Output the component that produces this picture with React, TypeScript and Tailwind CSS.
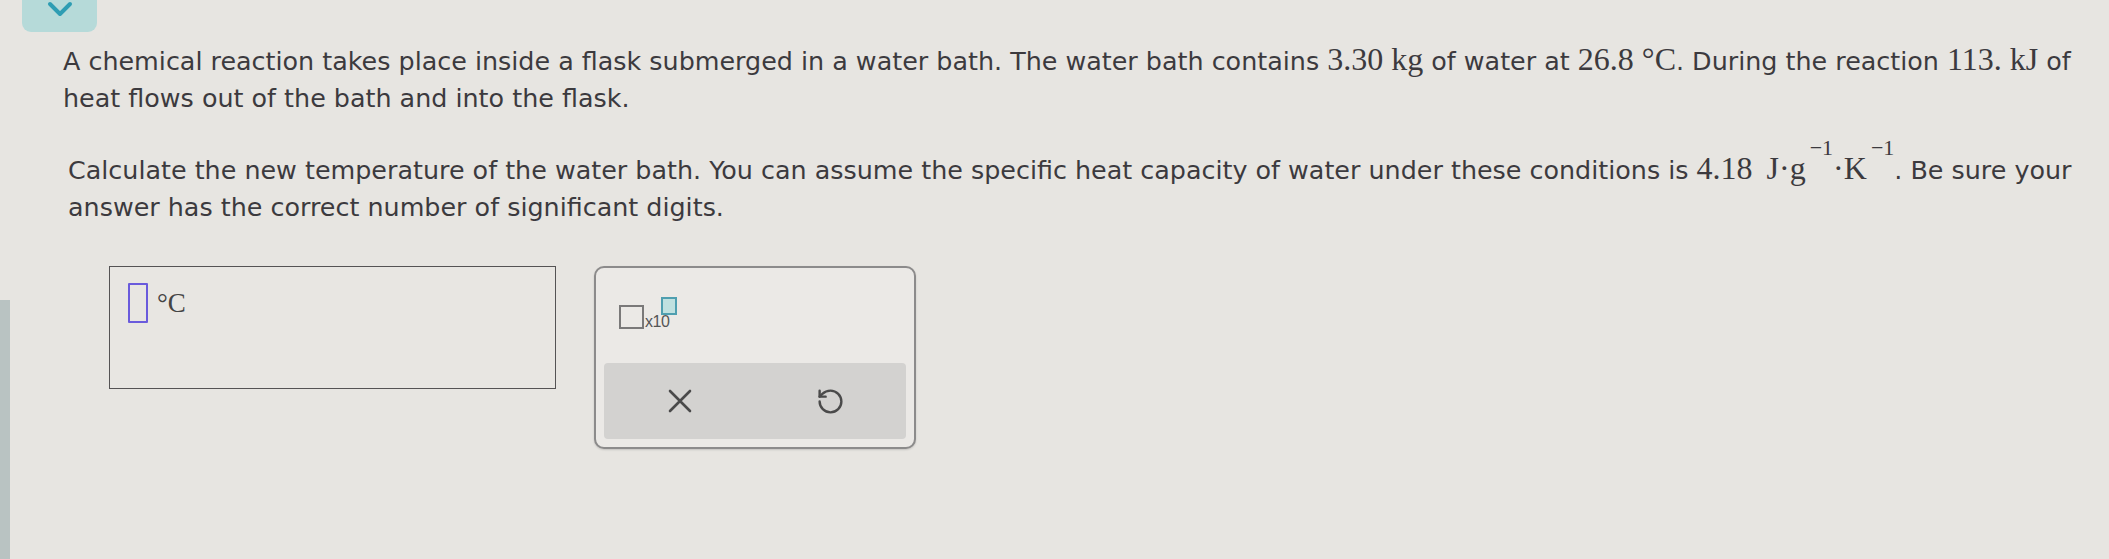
import { RotateCcw } from 'lucide-react'

const SANS = "font-['DejaVu_Sans','Verdana',sans-serif]"

function M({ children }: { children: React.ReactNode }) {
  // math parts are set in a serif face, larger than body text
  return <span className="font-['Liberation_Serif',serif] text-[32px]">{children}</span>
}

function Sup({ children }: { children: React.ReactNode }) {
  return (
    <span className="font-['Liberation_Serif',serif] text-[22px] leading-none align-[24px] ml-[4px]">
      {children}
    </span>
  )
}

export default function App() {
  return (
    <div className={`${SANS} min-h-[559px] w-full bg-[#e7e5e1] text-[#3c3a3e] flex`}>
      {/* left edge strip */}
      <div className="w-[10px] shrink-0 flex flex-col">
        <div className="h-[300px]" />
        <div className="flex-1 bg-[#b9c3c2]" />
      </div>

      <div className="flex-1 flex flex-col">
        {/* collapse tab */}
        <div className="ml-[12px] w-[75px] h-[32px] rounded-b-[9px] bg-[#b6dad9] flex justify-center">
          <svg width="28" height="18" viewBox="0 0 28 18" fill="none" stroke="#2e9db3" strokeWidth={4} strokeLinecap="round" strokeLinejoin="round">
            <path d="M4 4 L14 14 L24 4" />
          </svg>
        </div>

        <p className="mt-[9px] ml-[53px] text-[25.4px] leading-[37px] whitespace-nowrap">
          A chemical reaction takes place inside a flask submerged in a water bath. The water bath contains <M>3.30 kg</M> of water at{' '}
          <M>26.8 °C</M>. During the reaction <M>113. kJ</M> of
          <br />
          heat flows out of the bath and into the flask.
        </p>

        <p className="mt-[20px] ml-[58px] text-[25.4px] leading-[37px] whitespace-nowrap">
          Calculate the new temperature of the water bath. You can assume the specific heat capacity of water under these conditions is{' '}
          <M>4.18</M>
          <span className="ml-[14px] font-['Liberation_Serif',serif] text-[32px]">J·g</span>
          <Sup>−1</Sup>
          <span className="font-['Liberation_Serif',serif] text-[32px]">·K</span>
          <Sup>−1</Sup>. Be sure your
          <br />
          answer has the correct number of significant digits.
        </p>

        {/* answer area */}
        <div className="mt-[40px] ml-[99px] flex items-start gap-[38px]">
          <div className="w-[447px] h-[123px] border-[1.5px] border-[#555354] bg-[#e8e6e2] pl-[18px] pt-[16px]">
            <div className="flex items-center gap-[9px]">
              <div className="w-[20px] h-[40px] border-2 border-[#6a5bdc] rounded-[1px]" />
              <span className="font-['Liberation_Serif',serif] text-[27px] text-[#444]">°C</span>
            </div>
          </div>

          <div className="w-[322px] h-[183px] border-2 border-[#8c8b8b] rounded-[10px] bg-[#ebe9e6] shadow-[0_1px_2px_rgba(0,0,0,0.15)] p-[8px] flex flex-col">
            <div className="h-[87px] pl-[15px] pt-[21px]">
              <div className="flex items-end">
                <div className="w-[25px] h-[24px] border-2 border-[#7a7979]" />
                <div className="ml-[1px] flex flex-col">
                  <div className="ml-[16px] w-[16px] h-[18px] border-2 border-[#4f9fb0] bg-[#c0e1e0]" />
                  <span className="font-['Liberation_Sans',sans-serif] text-[16px] leading-[14px] text-[#555] tracking-[-0.5px]">x10</span>
                </div>
              </div>
            </div>
            <div className="flex-1 rounded-[4px] bg-[#d3d2d0] flex">
              <div className="flex-1 flex items-center justify-center">
                <svg width="24" height="24" viewBox="0 0 24 24" fill="none" stroke="#4a4a4a" strokeWidth={2.6} strokeLinecap="round">
                  <path d="M2 2 L22 22 M22 2 L2 22" />
                </svg>
              </div>
              <div className="flex-1 flex items-center justify-center">
                <RotateCcw size={29} strokeWidth={2.4} absoluteStrokeWidth color="#4a4a4a" />
              </div>
            </div>
          </div>
        </div>
      </div>
    </div>
  )
}
